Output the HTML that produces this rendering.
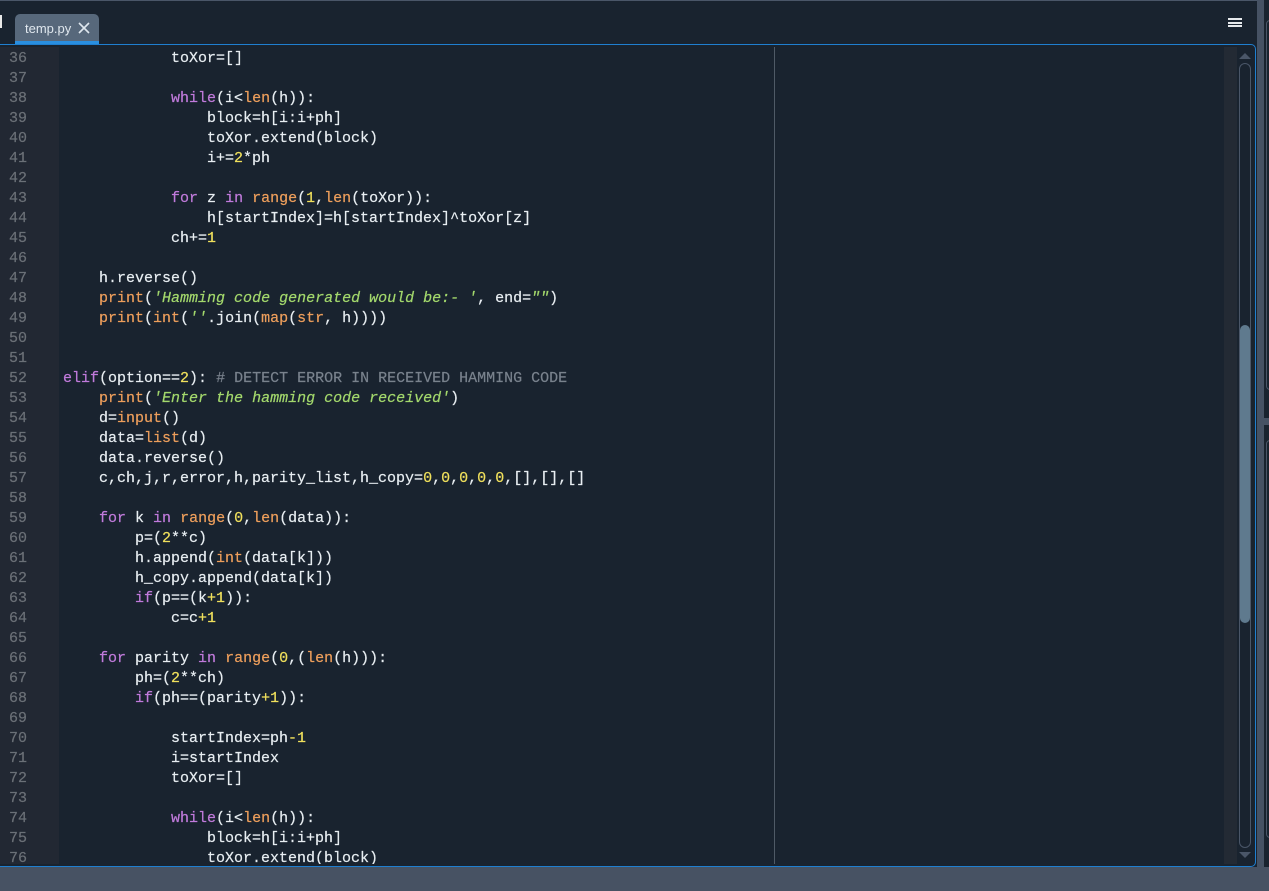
<!DOCTYPE html>
<html><head><meta charset="utf-8"><style>
html,body{margin:0;padding:0;width:1269px;height:891px;overflow:hidden;background:#19232f}
div{position:absolute;box-sizing:border-box}
pre{position:absolute;margin:0;font:15px/20px "Liberation Mono",monospace;font-variant-ligatures:none;-webkit-text-stroke:0.2px currentColor}
#code{left:63px;top:49px;color:#e8eef2;height:815px;overflow:hidden}
#nums{left:9px;top:49px;color:#6b7077;height:815px;overflow:hidden}
b{font-weight:normal;color:#c17bdc}
i{font-style:normal;color:#ee9f5c}
u{text-decoration:none;color:#f0e05c}
s{text-decoration:none;font-style:italic;color:#a3d86c}
em{font-style:normal;color:#79828d}
</style></head><body>
<div style="left:0;top:0;width:1257px;height:1px;background:#4a5668"></div>
<div style="left:0;top:15px;width:2px;height:13px;background:#e8e8e8"></div>
<div style="left:15px;top:14px;width:84px;height:30px;background:#57687b;border-radius:5px 5px 0 0"></div>
<div style="left:15px;top:41px;width:84px;height:3px;background:#2a8fe0"></div>
<div style="left:25px;top:21px;font:13px/16px 'Liberation Sans',sans-serif;color:#dfe7ee">temp.py</div>
<svg style="position:absolute;left:78px;top:22px" width="12" height="12" viewBox="0 0 12 12"><path d="M1 1L11 11M11 1L1 11" stroke="#dfe7ee" stroke-width="1.6" fill="none"/></svg>
<div style="left:1228px;top:18px;width:14px;height:1.5px;background:#e6e9ec"></div>
<div style="left:1228px;top:22px;width:14px;height:1.5px;background:#e6e9ec"></div>
<div style="left:1228px;top:25px;width:14px;height:2px;background:#e6e9ec"></div>

<div style="left:0;top:47px;width:59px;height:817px;background:#222833"></div>
<div style="left:1224px;top:47px;width:13px;height:817px;background:#232a34"></div>
<div style="left:774px;top:47px;width:1px;height:817px;background:#4f5a66"></div>

<pre id="nums">36
37
38
39
40
41
42
43
44
45
46
47
48
49
50
51
52
53
54
55
56
57
58
59
60
61
62
63
64
65
66
67
68
69
70
71
72
73
74
75
76</pre>
<pre id="code">            toXor=[]

            <b>while</b>(i&lt;<i>len</i>(h)):
                block=h[i:i+ph]
                toXor.extend(block)
                i+=<u>2</u>*ph

            <b>for</b> z <b>in</b> <i>range</i>(<u>1</u>,<i>len</i>(toXor)):
                h[startIndex]=h[startIndex]^toXor[z]
            ch+=<u>1</u>

    h.reverse()
    <i>print</i>(<s>'Hamming code generated would be:- '</s>, end=<s>""</s>)
    <i>print</i>(<i>int</i>(<s>''</s>.join(<i>map</i>(<i>str</i>, h))))


<b>elif</b>(option==<u>2</u>): <em># DETECT ERROR IN RECEIVED HAMMING CODE</em>
    <i>print</i>(<s>'Enter the hamming code received'</s>)
    d=<i>input</i>()
    data=<i>list</i>(d)
    data.reverse()
    c,ch,j,r,error,h,parity_list,h_copy=<u>0</u>,<u>0</u>,<u>0</u>,<u>0</u>,<u>0</u>,[],[],[]

    <b>for</b> k <b>in</b> <i>range</i>(<u>0</u>,<i>len</i>(data)):
        p=(<u>2</u>**c)
        h.append(<i>int</i>(data[k]))
        h_copy.append(data[k])
        <b>if</b>(p==(k<u>+1</u>)):
            c=c<u>+1</u>

    <b>for</b> parity <b>in</b> <i>range</i>(<u>0</u>,(<i>len</i>(h))):
        ph=(<u>2</u>**ch)
        <b>if</b>(ph==(parity<u>+1</u>)):

            startIndex=ph<u>-1</u>
            i=startIndex
            toXor=[]

            <b>while</b>(i&lt;<i>len</i>(h)):
                block=h[i:i+ph]
                toXor.extend(block)</pre>

<div style="left:-2px;top:44px;width:1258px;height:823px;border:1px solid #1f7fd0;border-radius:0 5px 5px 0"></div>

<div style="left:1239px;top:63px;width:12px;height:785px;border:1px solid #4a5668;border-radius:6px"></div>
<div style="left:1240px;top:325px;width:10px;height:298px;background:#5f7a8e;border-radius:5px"></div>
<svg style="position:absolute;left:1239px;top:52px" width="12" height="8"><path d="M0 7L6 1L12 7Z" fill="#4a5668"/></svg>
<svg style="position:absolute;left:1239px;top:851px" width="12" height="8"><path d="M0 1H12L6 7Z" fill="#4a5668"/></svg>

<div style="left:1257px;top:0;width:7px;height:867px;background:#465264"></div>
<div style="left:1266px;top:20px;width:8px;height:370px;border:1px solid #4a5668;border-radius:5px"></div>
<div style="left:1264px;top:418px;width:5px;height:7px;background:#465264"></div>
<div style="left:1266px;top:440px;width:8px;height:398px;border:1px solid #4a5668;border-radius:5px"></div>
<div style="left:0;top:867px;width:1269px;height:24px;background:#475263"></div>
</body></html>
